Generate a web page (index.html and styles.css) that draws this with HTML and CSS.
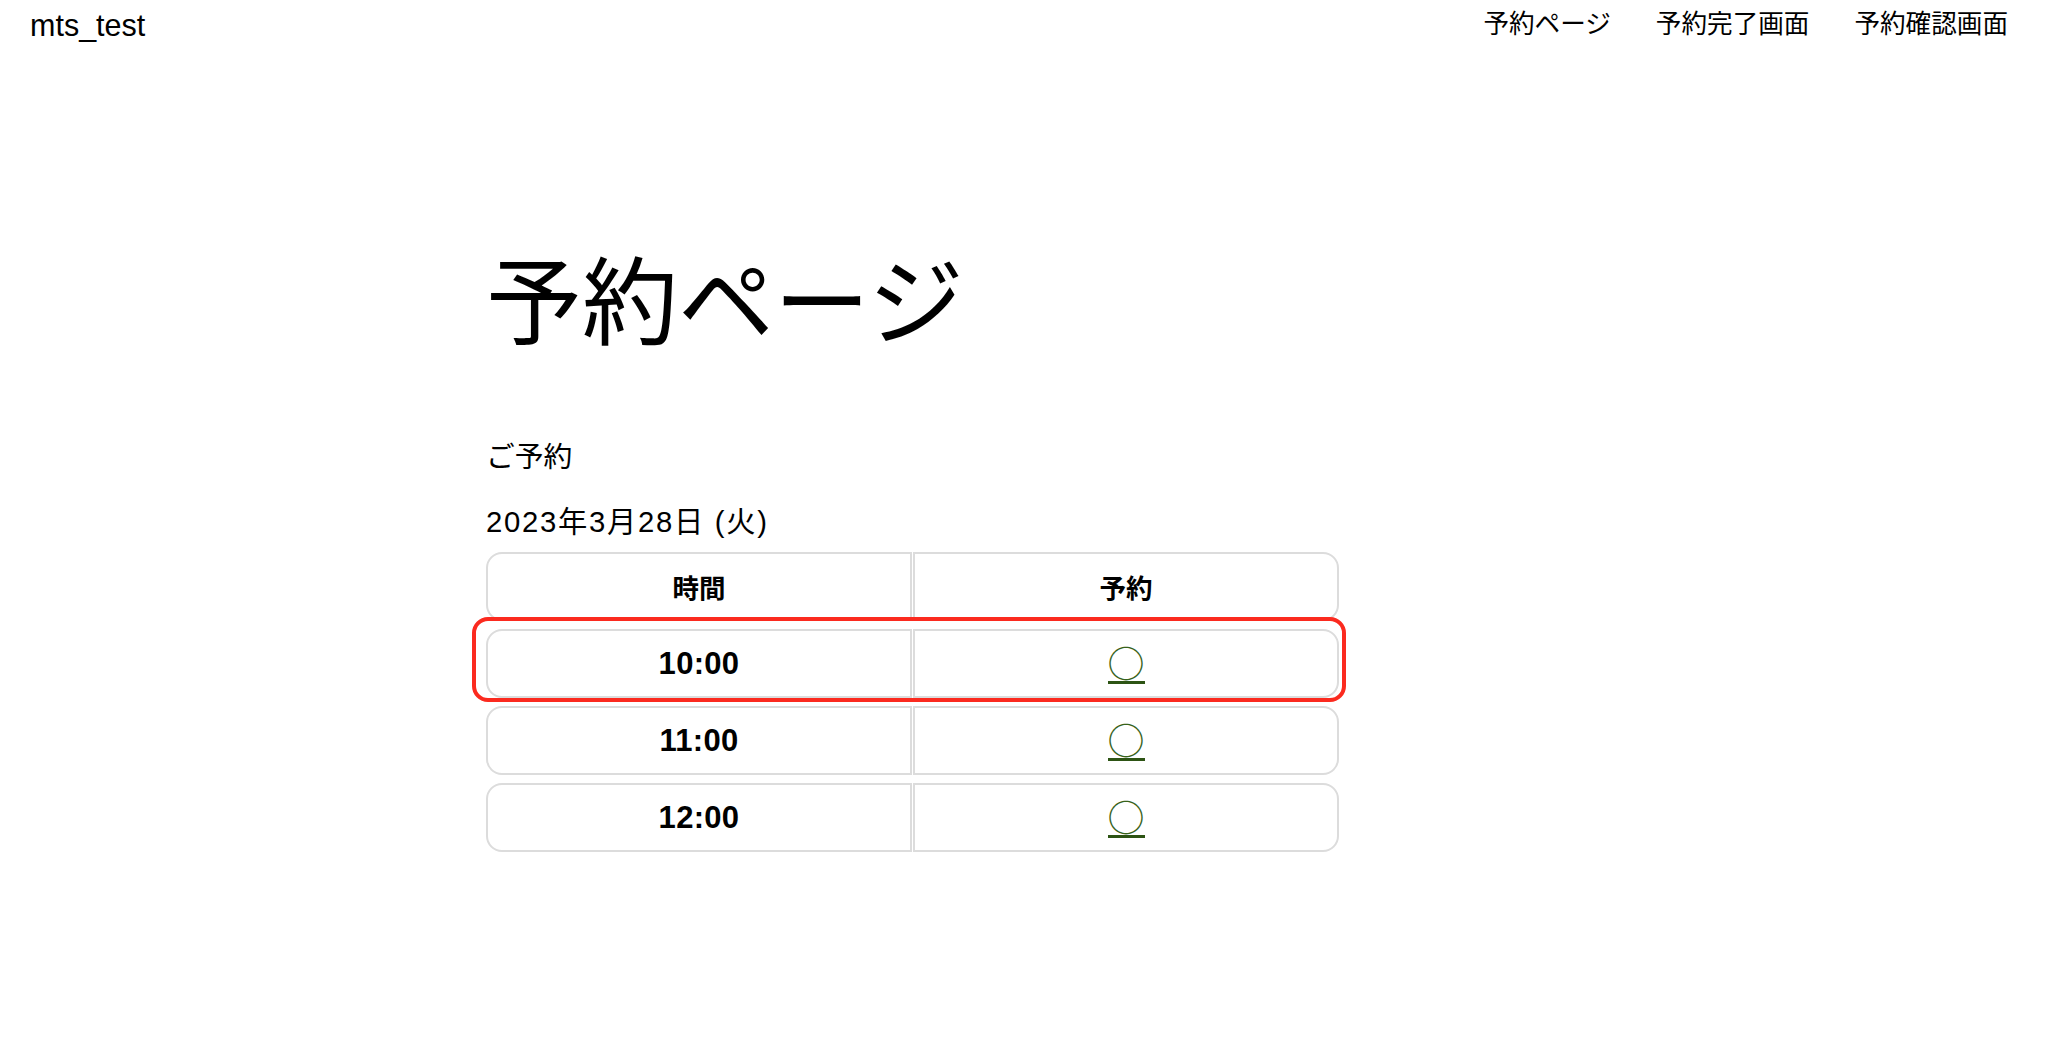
FILE: index.html
```html
<!DOCTYPE html>
<html lang="ja">
<head>
<meta charset="utf-8">
<title>予約ページ</title>
<link rel="stylesheet" href="styles.css">
</head>
<body>
<header class="navbar">
  <a class="brand" href="#">mts_test</a>
  <nav class="nav">
    <a class="nav-link" href="#">予約ページ</a>
    <a class="nav-link" href="#">予約完了画面</a>
    <a class="nav-link" href="#">予約確認画面</a>
  </nav>
</header>
<main class="content">
  <h1 class="title">予約ページ</h1>
  <p class="lead">ご予約</p>
  <p class="date">2023年3月28日 (火)</p>
  <div class="sched">
    <div class="row head">
      <div class="cell">時間</div>
      <div class="cell">予約</div>
    </div>
    <div class="row highlight">
      <div class="cell time">10:00</div>
      <div class="cell"><a class="mark" href="#">○</a></div>
    </div>
    <div class="row">
      <div class="cell time">11:00</div>
      <div class="cell"><a class="mark" href="#">○</a></div>
    </div>
    <div class="row">
      <div class="cell time">12:00</div>
      <div class="cell"><a class="mark" href="#">○</a></div>
    </div>
  </div>
</main>
</body>
</html>
```
FILE: styles.css
```css
* { box-sizing: border-box; }

html, body {
  margin: 0;
  padding: 0;
  background: #fff;
}

body {
  font-family: "Liberation Sans", "Noto Sans CJK JP", sans-serif;
  color: #000;
}

a { color: inherit; text-decoration: none; }

.navbar {
  display: flex;
  justify-content: space-between;
  align-items: flex-start;
  height: 56px;
  padding: 8px 40px 0 30px;
}

.brand {
  font-size: 30.5px;
  line-height: normal;
  color: #000;
}

.nav {
  display: flex;
  gap: 45px;
  padding-top: 1px;
}

.nav-link {
  font-size: 25.6px;
  line-height: 1.2;
  color: #000;
}

.content {
  width: 853px;
  margin-left: 486px;
}

.title {
  margin: 190px 0 0;
  font-size: 96px;
  line-height: 1.2;
  font-weight: 400;
}

.lead {
  margin: 75px 0 0;
  font-size: 28.8px;
  line-height: 1.5;
}

.date {
  margin: 21px 0 0;
  font-size: 29.3px;
  line-height: 1.5;
  letter-spacing: 1.7px;
}

.sched {
  margin-top: 8px;
  display: flex;
  flex-direction: column;
  gap: 8px;
}

.row {
  position: relative;
  display: grid;
  grid-template-columns: 1fr 1fr;
  column-gap: 1px;
}

.cell {
  height: 69px;
  border: 2px solid #dcdcdc;
  display: flex;
  align-items: center;
  justify-content: center;
  font-size: 26.5px;
  font-weight: 700;
}

.cell:first-child {
  border-radius: 16px 0 0 16px;
}

.cell:last-child {
  border-radius: 0 16px 16px 0;
}

.cell.time {
  font-size: 31px;
  letter-spacing: 0.3px;
}

.mark {
  display: inline-block;
  font-family: "Noto Sans CJK JP", sans-serif;
  font-size: 37px;
  line-height: 1;
  font-weight: 400;
  color: #38631b;
  border-bottom: 3px solid #2d5414;
}

.highlight::after {
  content: "";
  position: absolute;
  top: -12px;
  left: -14px;
  right: -7px;
  bottom: -4px;
  border: 4px solid #fb2a1f;
  border-radius: 16px;
  pointer-events: none;
}
```
